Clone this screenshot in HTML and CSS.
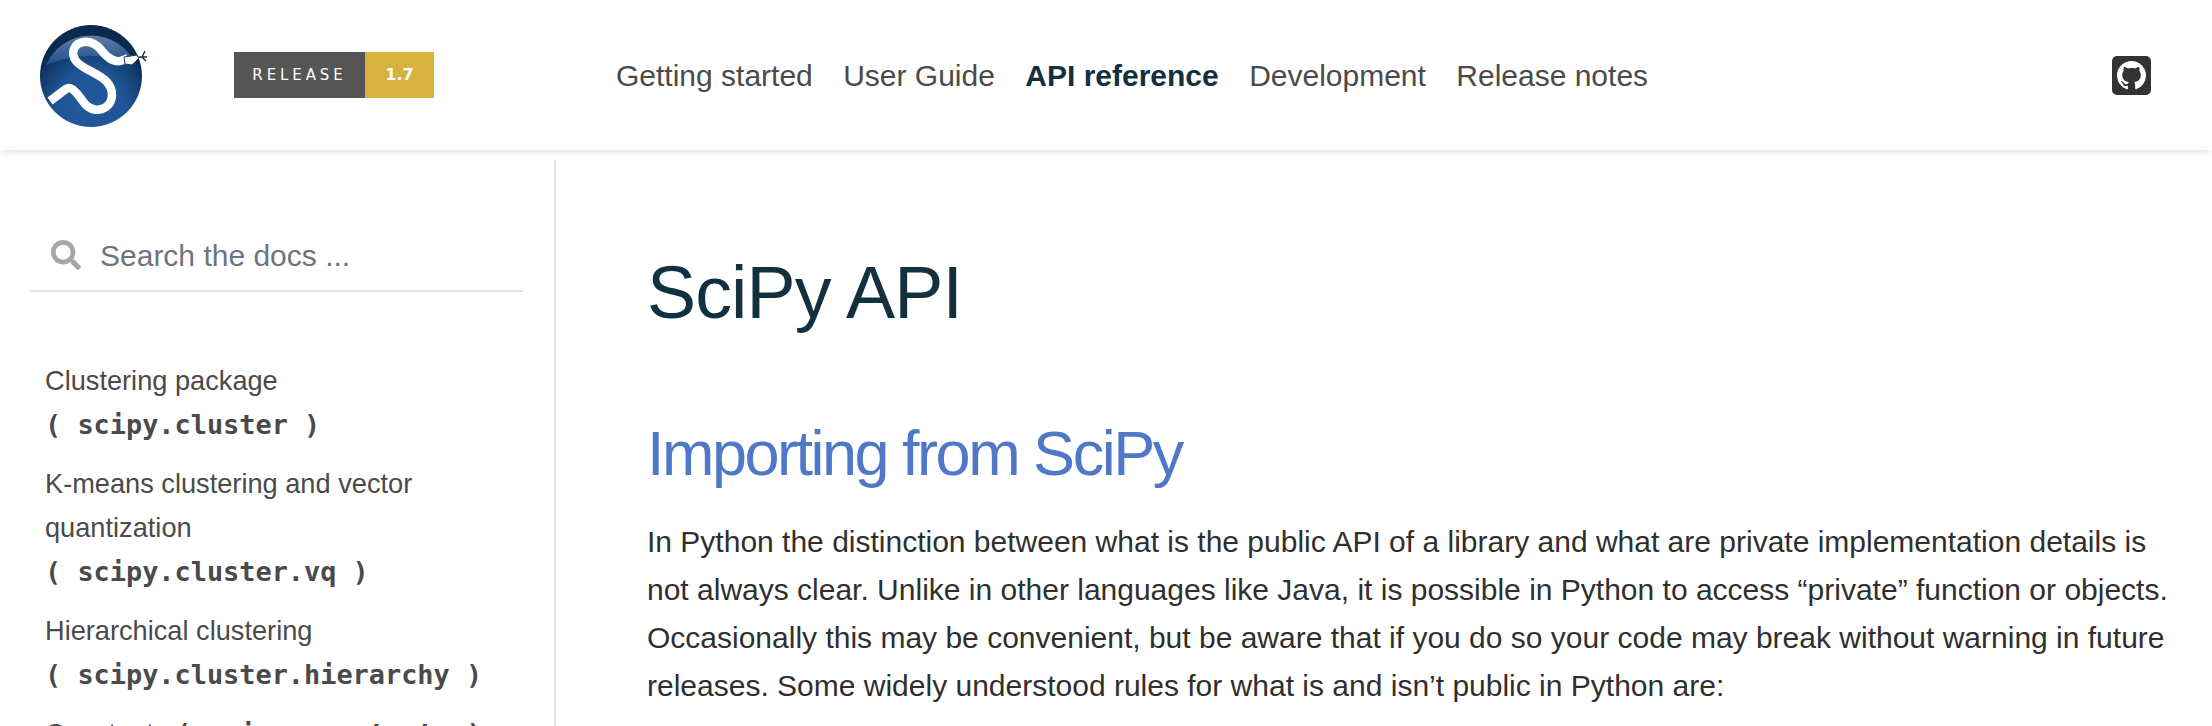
FILE: index.html
```html
<!DOCTYPE html>
<html lang="en">
<head>
    <meta charset="UTF-8">
    <title>SciPy API</title>
    <link rel="stylesheet" href="styles.css">
</head>
<body>
    <header class="navbar">
        <a class="logo" href="#">
            <svg width="130" height="110" viewBox="0 0 130 110">
                <defs>
                    <radialGradient id="ball" cx="50%" cy="78%" r="62%">
                        <stop offset="0" stop-color="#225a9f"/>
                        <stop offset="0.55" stop-color="#1f5494"/>
                        <stop offset="0.85" stop-color="#123d6f"/>
                        <stop offset="1" stop-color="#0b2a4d"/>
                    </radialGradient>
                    <linearGradient id="shine" x1="0" y1="0" x2="0" y2="1">
                        <stop offset="0" stop-color="#5f7fa2"/>
                        <stop offset="1" stop-color="#1d4f8b"/>
                    </linearGradient>
                </defs>
                <circle cx="51" cy="55" r="51" fill="url(#ball)"/>
                <path d="M6 44 A49 49 0 0 1 96 44 Q51 26 6 44 Z" fill="url(#shine)"/>
                <path d="M10 80 L26 68 Q29 66 32 68 C38 72 42 80 46 84 C52 90 60 90 66 86 C74 80 74 68 66 60 C58 52 42 48 36 40 C30 32 34 22 44 21 C52 20 58 25 62 30 C66 35 70 39 76 40 C80 41 84 39 88 37" fill="none" stroke="#fff" stroke-width="8.5" stroke-linejoin="round"/>
                <path d="M84 36 L97 34 L99 37 L92 44 L85 43 Z" fill="#fff" stroke="#123a63" stroke-width="1"/>
                <path d="M99 36 L107 36 M102 36 L105 30 M102 36 L106 40" stroke="#1c2f45" stroke-width="1.5" fill="none"/>
            </svg>
        </a>
        <div class="release">
            <span class="release-label">RELEASE</span><span class="release-num">1.7</span>
        </div>
        <nav class="nav-links">
            <a href="#">Getting started</a>
            <a href="#">User Guide</a>
            <a href="#" class="active">API reference</a>
            <a href="#">Development</a>
            <a href="#">Release notes</a>
        </nav>
        <a class="github" href="#">
            <svg width="29" height="29" viewBox="0 0 16 16"><path fill="#fff" d="M8 0C3.58 0 0 3.58 0 8c0 3.54 2.29 6.53 5.47 7.59.4.07.55-.17.55-.38 0-.19-.01-.82-.01-1.49-2.01.37-2.53-.49-2.69-.94-.09-.23-.48-.94-.82-1.13-.28-.15-.68-.52-.01-.53.63-.01 1.08.58 1.23.82.72 1.21 1.87.87 2.33.66.07-.52.28-.87.51-1.07-1.78-.2-3.64-.89-3.64-3.95 0-.87.31-1.59.82-2.15-.08-.2-.36-1.02.08-2.12 0 0 .67-.21 2.2.82.64-.18 1.32-.27 2-.27.68 0 1.36.09 2 .27 1.53-1.04 2.2-.82 2.2-.82.44 1.1.16 1.92.08 2.12.51.56.82 1.27.82 2.15 0 3.07-1.87 3.75-3.65 3.95.29.25.54.73.54 1.48 0 1.07-.01 1.93-.01 2.2 0 .21.15.46.55.38A8.013 8.013 0 0016 8c0-4.42-3.58-8-8-8z"/></svg>
        </a>
    </header>

    <div class="page">
        <aside class="sidebar">
            <form class="search">
                <svg class="search-icon" width="30" height="30" viewBox="0 0 512 512"><path fill="#a4a6a7" d="M505 442.7L405.3 343c-4.5-4.5-10.6-7-17-7H372c27.6-35.3 44-79.7 44-128C416 93.1 322.9 0 208 0S0 93.1 0 208s93.1 208 208 208c48.3 0 92.7-16.4 128-44v16.3c0 6.4 2.5 12.5 7 17l99.7 99.7c9.4 9.4 24.6 9.4 33.9 0l28.3-28.3c9.4-9.4 9.4-24.6.1-34zM208 336c-70.7 0-128-57.2-128-128 0-70.7 57.2-128 128-128 70.7 0 128 57.2 128 128 0 70.7-57.2 128-128 128z"/></svg>
                <input type="search" placeholder="Search the docs ...">
            </form>
            <ul class="toc">
                <li><a href="#">Clustering package <code>( scipy.cluster )</code></a></li>
                <li><a href="#">K-means clustering and vector quantization <code>( scipy.cluster.vq )</code></a></li>
                <li><a href="#">Hierarchical clustering <code>( scipy.cluster.hierarchy )</code></a></li>
                <li><a href="#">Constants <code>( scipy.constants )</code></a></li>
            </ul>
        </aside>
        <main class="content">
            <h1>SciPy API</h1>
            <h2>Importing from SciPy</h2>
            <p>In Python the distinction between what is the public API of a library and what are private implementation details is not always clear. Unlike in other languages like Java, it is possible in Python to access “private” function or objects. Occasionally this may be convenient, but be aware that if you do so your code may break without warning in future releases. Some widely understood rules for what is and isn’t public in Python are:</p>
        </main>
    </div>
</body>
</html>
```

FILE: styles.css
```css
html, body {
    height: 726px;
    margin: 0;
    overflow: hidden;
}
body {
    font-family: "Liberation Sans", Arial, sans-serif;
    color: #2f2f2f;
    background: #fff;
}
a {
    color: inherit;
    text-decoration: none;
}

/* top bar */
.navbar {
    height: 150px;
    display: flex;
    align-items: center;
    background: #fff;
    box-shadow: 0 2px 8px rgba(0, 0, 0, 0.12);
    position: relative;
}
.logo {
    display: flex;
    margin-left: 40px;
    margin-top: 2px;
    width: 194px;
}
.release {
    display: flex;
    height: 46px;
    margin-top: -1px;
    font-family: "DejaVu Sans", Verdana, sans-serif;
    color: #fff;
}
.release-label {
    width: 131px;
    background: #555;
    font-size: 15px;
    letter-spacing: 3.9px;
    line-height: 46px;
    text-align: center;
}
.release-num {
    width: 69px;
    background: #d8b13f;
    font-size: 16px;
    font-weight: bold;
    line-height: 46px;
    text-align: center;
}
.nav-links {
    display: flex;
    gap: 30.4px;
    margin-left: 182px;
    padding-top: 2px;
    font-size: 30px;
    color: #4a4a4a;
}
.nav-links .active {
    font-weight: bold;
    color: #13303f;
}
.github {
    width: 39px;
    height: 39px;
    margin-left: auto;
    margin-right: 61px;
    display: flex;
    align-items: center;
    justify-content: center;
    background: #333;
    border-radius: 5px;
}

/* below the bar */
.page {
    display: flex;
    margin-top: 10px;
}
.sidebar {
    width: 556px;
    height: 566px;
    box-sizing: border-box;
    border-right: 2px solid #e3e3e3;
    padding: 0 31px 0 30px;
    flex-shrink: 0;
}
.search {
    display: flex;
    align-items: center;
    gap: 19px;
    height: 70px;
    margin-top: 60px;
    padding-left: 21px;
    border-bottom: 2px solid #e3e3e3;
}
.search-icon {
    flex-shrink: 0;
}
.search input {
    flex: 1;
    min-width: 0;
    border: none;
    outline: none;
    padding: 1px 0 0;
    font-family: inherit;
    font-size: 30px;
    color: #6c757d;
    background: none;
}
.search input::placeholder {
    color: #6c757d;
    opacity: 1;
}
.toc {
    list-style: none;
    margin: 67px 0 0;
    padding: 0 30px 0 15px;
    font-size: 27.2px;
    line-height: 44px;
    color: #4a4a4a;
}
.toc li {
    margin-bottom: 15px;
}
.toc code {
    font-family: "DejaVu Sans Mono", "Liberation Mono", monospace;
    font-size: 26.9px;
    font-weight: bold;
    line-height: 1;
    white-space: nowrap;
}
.content {
    flex: 1;
    padding: 0 30px 0 91px;
}
h1 {
    margin: 89px 0 0;
    font-size: 73.6px;
    font-weight: normal;
    line-height: 88px;
    letter-spacing: -0.9px;
    color: #13303f;
}
h2 {
    margin: 78px 0 0;
    font-size: 63px;
    font-weight: normal;
    line-height: 76px;
    letter-spacing: -2.5px;
    color: #4f78c9;
}
p {
    margin: 27px 0 0;
    font-size: 30px;
    line-height: 48px;
}
```
